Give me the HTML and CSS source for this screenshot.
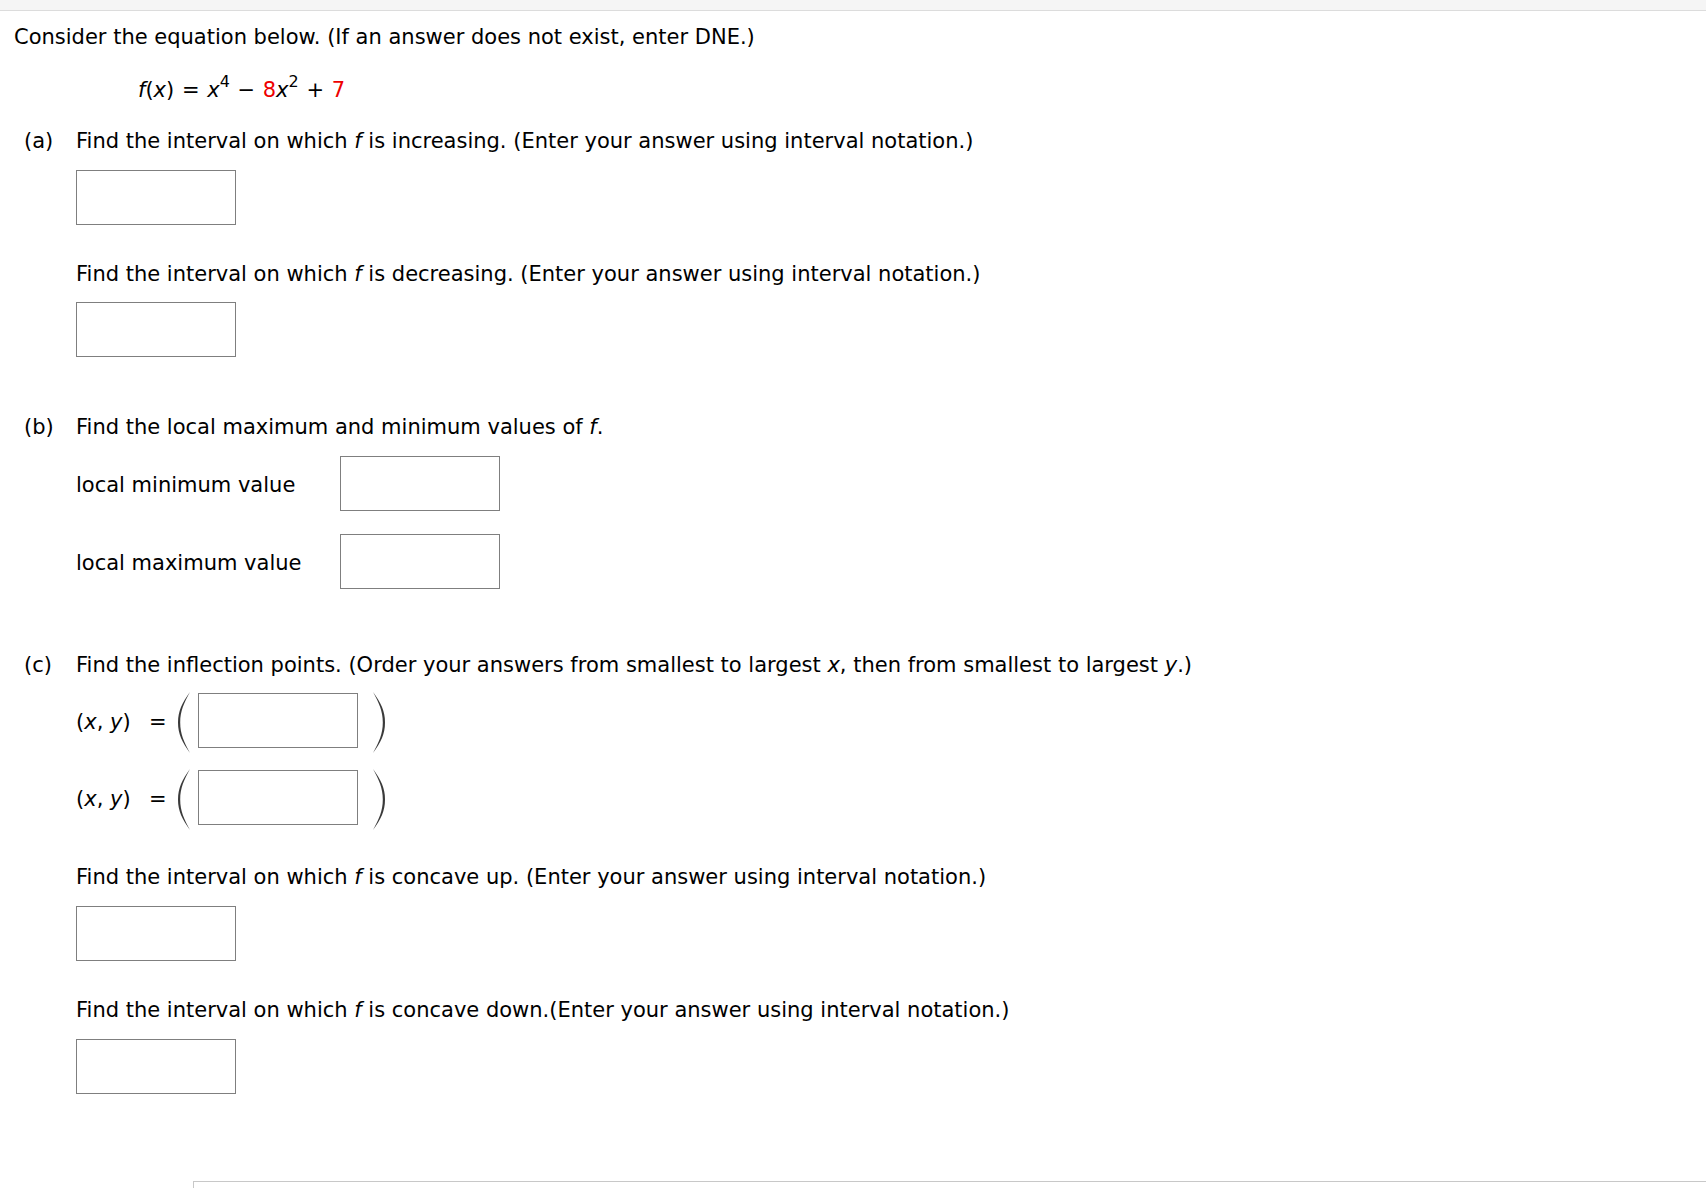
FILE: index.html
```html
<!DOCTYPE html>
<html lang="en">
<head>
<meta charset="utf-8">
<title>Question</title>
<link rel="stylesheet" href="styles.css">
</head>
<body>
<div class="topbar"></div>
<main class="question">
  <p class="intro">Consider the equation below. (If an answer does not exist, enter DNE.)</p>
  <p class="equation"><i>f</i>(<i>x</i>) = <i>x</i><sup>4</sup> &minus; <span class="red">8</span><i>x</i><sup>2</sup> + <span class="red">7</span></p>

  <section class="part part-a">
    <div class="part-head"><span class="label">(a)</span><span>Find the interval on which <i>f</i> is increasing. (Enter your answer using interval notation.)</span></div>
    <div class="part-body">
      <div class="answer"></div>
      <p class="prompt">Find the interval on which <i>f</i> is decreasing. (Enter your answer using interval notation.)</p>
      <div class="answer"></div>
    </div>
  </section>

  <section class="part part-b">
    <div class="part-head"><span class="label">(b)</span><span>Find the local maximum and minimum values of <i>f</i>.</span></div>
    <div class="part-body">
      <div class="value-row first"><span class="value-label">local minimum value</span><div class="answer"></div></div>
      <div class="value-row second"><span class="value-label">local maximum value</span><div class="answer"></div></div>
    </div>
  </section>

  <section class="part part-c">
    <div class="part-head"><span class="label">(c)</span><span>Find the inflection points. (Order your answers from smallest to largest <i>x</i>, then from smallest to largest <i>y</i>.)</span></div>
    <div class="part-body">
      <div class="point-row first">
        <span class="point-label">(<i>x</i>, <i>y</i>)</span><span class="eq">=</span>
        <svg class="paren" width="14" height="55" viewBox="0 0 14 55"><path d="M13 -1 C5 10 1 18 1 29.5 C1 41 5 49 13 60 C7 49 3.2 41 3.2 29.5 C3.2 18 7 10 13 -1 Z" fill="#3a3a3a"/></svg>
        <div class="answer"></div>
        <svg class="paren" width="14" height="55" viewBox="0 0 14 55"><path d="M1 -1 C9 10 13 18 13 29.5 C13 41 9 49 1 60 C7 49 10.8 41 10.8 29.5 C10.8 18 7 10 1 -1 Z" fill="#3a3a3a"/></svg>
      </div>
      <div class="point-row second">
        <span class="point-label">(<i>x</i>, <i>y</i>)</span><span class="eq">=</span>
        <svg class="paren" width="14" height="55" viewBox="0 0 14 55"><path d="M13 -1 C5 10 1 18 1 29.5 C1 41 5 49 13 60 C7 49 3.2 41 3.2 29.5 C3.2 18 7 10 13 -1 Z" fill="#3a3a3a"/></svg>
        <div class="answer"></div>
        <svg class="paren" width="14" height="55" viewBox="0 0 14 55"><path d="M1 -1 C9 10 13 18 13 29.5 C13 41 9 49 1 60 C7 49 10.8 41 10.8 29.5 C10.8 18 7 10 1 -1 Z" fill="#3a3a3a"/></svg>
      </div>
      <p class="prompt after-points">Find the interval on which <i>f</i> is concave up. (Enter your answer using interval notation.)</p>
      <div class="answer"></div>
      <p class="prompt">Find the interval on which <i>f</i> is concave down.(Enter your answer using interval notation.)</p>
      <div class="answer"></div>
    </div>
  </section>
</main>
<div class="footer-panel"></div>
</body>
</html>
```

FILE: styles.css
```css
html, body {
  margin: 0;
  padding: 0;
  background: #fff;
}

body {
  font-family: "DejaVu Sans", Verdana, sans-serif;
  font-size: 21px;
  line-height: 24px;
  color: #000;
}

.topbar {
  height: 10px;
  background: #f5f5f5;
  border-bottom: 1px solid #dcdcdc;
}

.question {
  padding-left: 14px;
}

p {
  margin: 0;
}

i {
  font-style: italic;
}

sup {
  font-size: 0.76em;
  line-height: 0;
  vertical-align: 0.6em;
}

.red {
  color: #ee0000;
}

/* text lines sit 1px lower in their slot */
.intro,
.equation,
.part-head,
.prompt {
  padding-top: 1px;
}

.intro {
  margin-top: 13px;
}

.equation {
  margin-top: 28px;
  padding-left: 124px;
  word-spacing: 1px;
}

.part-head {
  display: flex;
  padding-left: 10px;
}

.label {
  width: 52px;
  flex: none;
}

.part-a .part-head {
  margin-top: 26px;
}

.part-b .part-head {
  margin-top: 57px;
}

.part-c .part-head {
  margin-top: 63px;
}

.part-body {
  padding-left: 62px;
  display: flex;
  flex-direction: column;
  align-items: flex-start;
}

.answer {
  width: 160px;
  height: 55px;
  box-sizing: border-box;
  border: 1px solid #7f7f7f;
  background: #fff;
  margin-top: 17px;
  flex: none;
}

.prompt {
  margin-top: 36px;
}

.part-a .answer + .prompt + .answer {
  margin-top: 16px;
}

.value-row {
  display: flex;
  align-items: center;
  margin-top: 17px;
}

.value-row.second {
  margin-top: 23px;
}

.value-row .answer {
  margin-top: 0;
}

.value-label {
  width: 264px;
  padding-top: 2px;
}

.point-row {
  display: flex;
  align-items: center;
  margin-top: 16px;
}

.point-row.second {
  margin-top: 22px;
}

.point-row .answer {
  margin-top: 0;
  margin-left: 7px;
  margin-right: 14px;
}

.point-label {
  width: 73px;
  padding-top: 2px;
}

.eq {
  width: 28px;
  padding-top: 2px;
}

.paren {
  display: block;
  flex: none;
  overflow: visible;
}

.prompt.after-points {
  margin-top: 39px;
}

.footer-panel {
  margin-top: 87px;
  margin-left: 193px;
  height: 40px;
  border-top: 1px solid #c8c8c8;
  border-left: 1px solid #c8c8c8;
}
```
